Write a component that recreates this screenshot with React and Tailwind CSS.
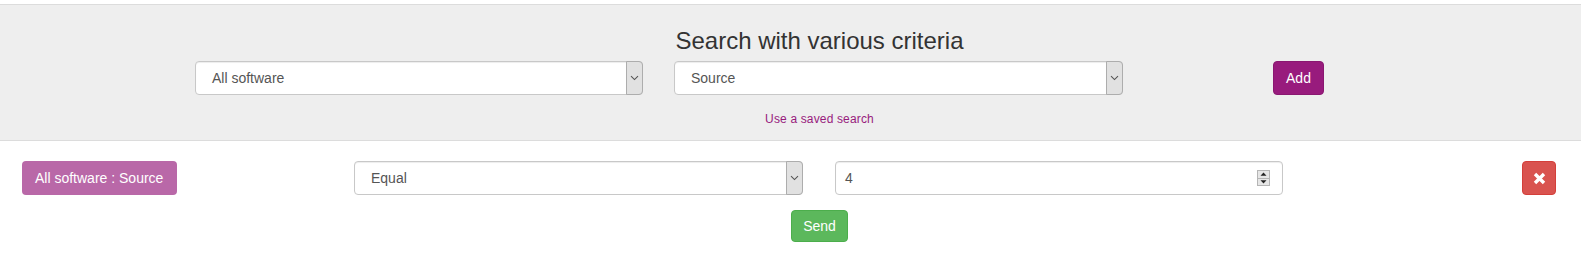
import React from "react";

function Chevron() {
  return (
    <svg width="9" height="6" viewBox="0 0 9 6" fill="none">
      <path d="M1 1.2 L4.5 4.6 L8 1.2" stroke="#555" strokeWidth="1.1" />
    </svg>
  );
}

function FakeSelect({ label, w }) {
  return (
    <div
      className={`${w} h-[34px] flex items-stretch bg-white border border-[#c8c8c8] rounded-[4px] shadow-[inset_0_1px_1px_rgba(0,0,0,0.075)]`}
    >
      <div className="flex-1 flex items-center pl-[16px] text-[14px] text-[#555]">{label}</div>
      <div className="w-[17px] my-[-1px] mr-[-1px] flex items-center justify-center bg-[#e1e1e1] border border-[#adadad] rounded-r-[4px]">
        <Chevron />
      </div>
    </div>
  );
}

function Spinner() {
  return (
    <div className="w-[13px] h-[16px] flex flex-col bg-[#e6e6e6] border border-[#b5b5b5]">
      <div className="flex-1 flex items-center justify-center border-b border-[#b5b5b5]">
        <svg width="7" height="4" viewBox="0 0 7 4">
          <path d="M0.5 3.8 L3.5 0.5 L6.5 3.8 Z" fill="#222" />
        </svg>
      </div>
      <div className="flex-1 flex items-center justify-center">
        <svg width="7" height="4" viewBox="0 0 7 4">
          <path d="M0.5 0.2 L3.5 3.5 L6.5 0.2 Z" fill="#222" />
        </svg>
      </div>
    </div>
  );
}

export default function App() {
  return (
    <div className="w-full h-[255px] bg-white overflow-hidden font-['Liberation_Sans',Arial,Helvetica,sans-serif] text-[#333]">
      <div className="pt-[4px]">
        <section className="bg-[#eeeeee] border-y border-[#dcdcdc] h-[137px]">
          <div className="pt-[22px] flex justify-center pl-[58px]">
            <h3 className="text-[24px] leading-[27px] font-normal text-[#333]">
              Search with various criteria
            </h3>
          </div>
          <div className="mt-[7px] flex items-center pl-[195px]">
            <FakeSelect label="All software" w="w-[448px]" />
            <div className="w-[31px]" />
            <FakeSelect label="Source" w="w-[449px]" />
            <div className="w-[150px]" />
            <button className="w-[51px] h-[34px] rounded-[4px] bg-[#981b7d] border border-[#8a1771] text-white text-[14px]">
              Add
            </button>
          </div>
          <div className="mt-[16px] flex justify-center pl-[58px]">
            <a className="text-[12px] leading-[17px] tracking-[0.15px] text-[#981b7d]">Use a saved search</a>
          </div>
        </section>

        <section className="pt-[20px]">
          <div className="flex items-center pl-[22px]">
            <div className="w-[155px] h-[34px] rounded-[4px] bg-[#b968a8] text-white text-[14px] flex items-center pl-[13px]">
              All software : Source
            </div>
            <div className="w-[177px]" />
            <FakeSelect label="Equal" w="w-[449px]" />
            <div className="w-[32px]" />
            <div className="w-[448px] h-[34px] flex items-center justify-between bg-white border border-[#c8c8c8] rounded-[4px] pl-[9px] pr-[12px] shadow-[inset_0_1px_1px_rgba(0,0,0,0.075)]">
              <span className="text-[14px] text-[#555]">4</span>
              <Spinner />
            </div>
            <div className="w-[239px]" />
            <button className="w-[34px] h-[34px] rounded-[4px] bg-[#d9534f] border border-[#d43f3a] flex items-center justify-center">
              <svg width="13" height="13" viewBox="0 0 13 13">
                <path d="M2 2 L11 11 M11 2 L2 11" stroke="#fff" strokeWidth="3.4" strokeLinecap="butt" />
              </svg>
            </button>
          </div>
          <div className="mt-[15px] flex justify-center pl-[58px]">
            <button className="w-[57px] h-[32px] rounded-[4px] bg-[#5cb85c] border border-[#4cae4c] text-white text-[14px]">
              Send
            </button>
          </div>
        </section>
      </div>
    </div>
  );
}
